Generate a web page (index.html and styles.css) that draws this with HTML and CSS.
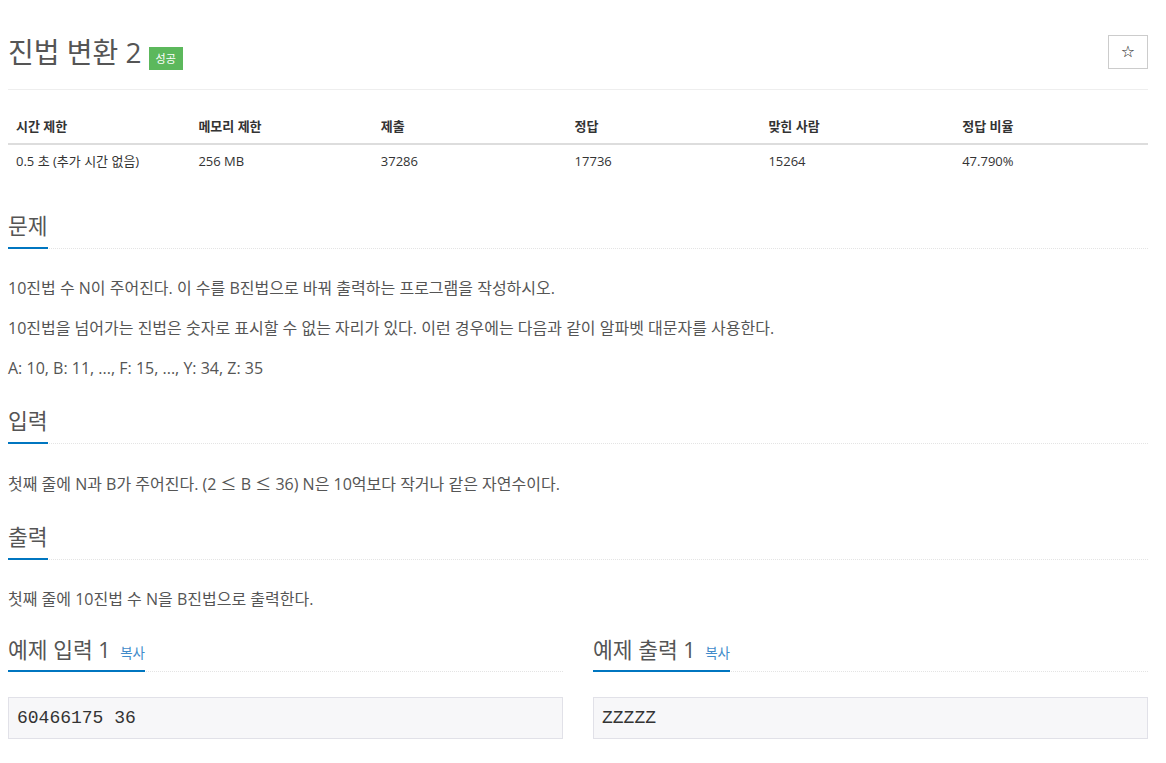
FILE: index.html
```html
<!DOCTYPE html>
<html lang="ko">
<head>
<meta charset="utf-8">
<title>진법 변환 2</title>
<link rel="stylesheet" href="styles.css">
</head>
<body>
<div class="page">
  <div class="page-header">
    <h1 class="title"><span>진법 변환 2</span><span class="badge">성공</span></h1>
    <button class="star-btn" type="button">☆</button>
  </div>

  <table class="info-table">
    <thead>
      <tr>
        <th class="c1">시간 제한</th>
        <th class="c1">메모리 제한</th>
        <th class="c2">제출</th>
        <th class="c2">정답</th>
        <th class="c2">맞힌 사람</th>
        <th class="c2">정답 비율</th>
      </tr>
    </thead>
    <tbody>
      <tr>
        <td>0.5 초 (추가 시간 없음)</td>
        <td>256 MB</td>
        <td>37286</td>
        <td>17736</td>
        <td>15264</td>
        <td>47.790%</td>
      </tr>
    </tbody>
  </table>

  <section class="section">
    <div class="headline"><h2>문제</h2></div>
    <div class="text">
      <p>10진법 수 N이 주어진다. 이 수를 B진법으로 바꿔 출력하는 프로그램을 작성하시오.</p>
      <p>10진법을 넘어가는 진법은 숫자로 표시할 수 없는 자리가 있다. 이런 경우에는 다음과 같이 알파벳 대문자를 사용한다.</p>
      <p>A: 10, B: 11, ..., F: 15, ..., Y: 34, Z: 35</p>
    </div>
  </section>

  <section class="section">
    <div class="headline"><h2>입력</h2></div>
    <div class="text">
      <p>첫째 줄에 N과 B가 주어진다. (2 <span class="math">≤</span> B <span class="math">≤</span> 36) N은 10억보다 작거나 같은 자연수이다.</p>
    </div>
  </section>

  <section class="section">
    <div class="headline"><h2>출력</h2></div>
    <div class="text">
      <p>첫째 줄에 10진법 수 N을 B진법으로 출력한다.</p>
    </div>
  </section>

  <div class="samples">
    <section class="sample">
      <div class="headline"><h2>예제 입력 1 <span class="copy">복사</span></h2></div>
      <pre class="sampledata">60466175 36</pre>
    </section>
    <section class="sample">
      <div class="headline"><h2>예제 출력 1 <span class="copy">복사</span></h2></div>
      <pre class="sampledata">ZZZZZ</pre>
    </section>
  </div>
</div>
</body>
</html>
```

FILE: styles.css
```css
html, body {
  margin: 0;
  padding: 0;
  background: #fff;
}

body {
  font-family: "Open Sans", "Noto Sans CJK KR", sans-serif;
  color: #555;
  font-size: 16px;
}

.page {
  width: 1140px;
  margin-left: 8px;
}

.page-header {
  display: flex;
  align-items: center;
  justify-content: space-between;
  height: 34px;
  padding-top: 35px;
  padding-bottom: 20px;
  border-bottom: 1px solid #eee;
}

.title {
  display: flex;
  align-items: center;
  gap: 7px;
  height: 34px;
  margin: 0;
  font-size: 28px;
  font-weight: 400;
  line-height: 34px;
  color: #555;
}

.badge {
  display: block;
  background: #5cb85c;
  color: #fff;
  font-size: 11px;
  line-height: 23px;
  height: 23px;
  padding: 0 7px;
  margin-top: 13px;
}

.star-btn {
  width: 40px;
  height: 34px;
  border: 1px solid #ccc;
  background: #fff;
  color: #222;
  font-size: 16px;
  line-height: 1;
  padding: 0;
  font-family: "DejaVu Sans", sans-serif;
}

.info-table {
  width: 100%;
  border-collapse: collapse;
  margin-top: 20px;
  font-size: 13px;
  color: #333;
}

.info-table th,
.info-table td {
  text-align: left;
  padding: 8px;
  line-height: 17px;
}

.info-table th {
  font-weight: 700;
  border-bottom: 2px solid #ddd;
}

.info-table .c1 { width: 16%; }
.info-table .c2 { width: 17%; }

.section {
  margin-top: 25px;
}

.info-table + .section {
  margin-top: 32px;
}

.headline {
  border-bottom: 1px dotted #e4e4e4;
  margin-bottom: 27px;
}

.headline h2 {
  display: inline-block;
  margin: 0 0 -1px 0;
  font-size: 21.5px;
  font-weight: 400;
  line-height: 32px;
  padding-bottom: 5px;
  border-bottom: 2px solid #0076c0;
  color: #555;
}

.text p {
  margin: 0 0 16px 0;
  line-height: 24px;
}

.text p:last-child {
  margin-bottom: 0;
}

.math {
  font-family: "Noto Sans CJK KR", sans-serif;
}

.copy {
  font-size: 13.5px;
  line-height: 1;
  color: #428bca;
  margin-left: 4px;
}

.samples {
  display: grid;
  grid-template-columns: 1fr 1fr;
  column-gap: 30px;
  margin-top: 23px;
}

.sample .headline h2 {
  padding-bottom: 4px;
}

.sample .headline {
  margin-bottom: 25px;
}

.sampledata {
  margin: 0;
  background: #f7f7f9;
  border: 1px solid #e1e1e8;
  padding: 9px 8px;
  font-family: "Liberation Mono", monospace;
  font-size: 18px;
  line-height: 22px;
  color: #333;
}
```
